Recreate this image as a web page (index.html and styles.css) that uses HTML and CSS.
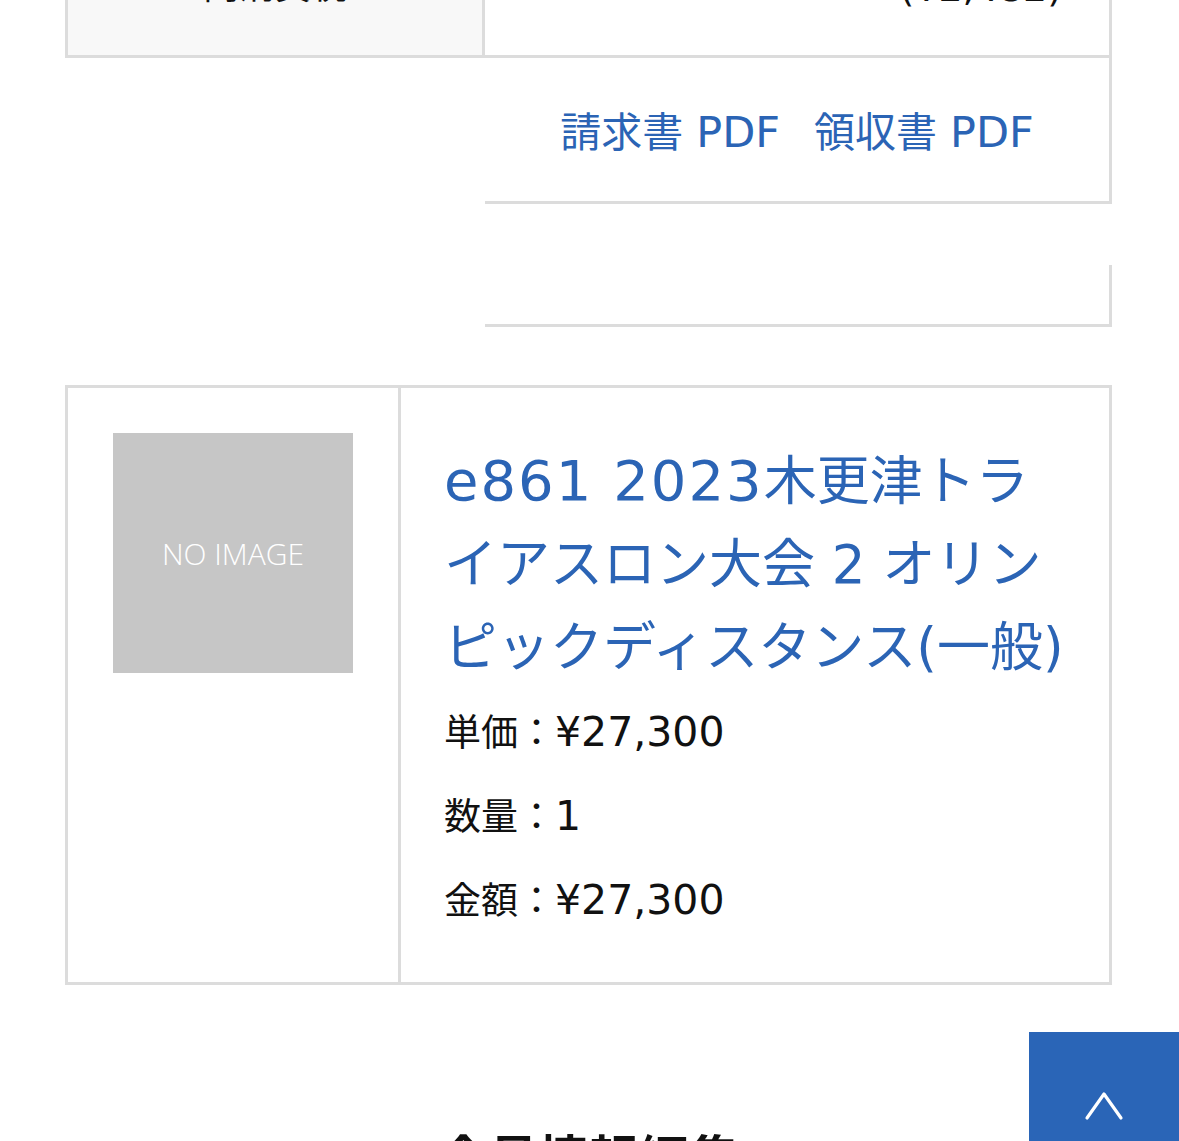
FILE: index.html
```html
<!DOCTYPE html>
<html lang="ja">
<head>
<meta charset="utf-8">
<title>注文履歴詳細</title>
<link rel="stylesheet" href="styles.css">
</head>
<body>
<main class="page">
  <div class="tax-row">
    <div class="tax-label">内消費税</div>
    <div class="tax-value">(¥2,482)</div>
  </div>
  <div class="doc-row">
    <div class="doc-links">
      <a class="doc-link" href="#">請求書 <span class="doc-type">PDF</span></a>
      <a class="doc-link" href="#">領収書 <span class="doc-type">PDF</span></a>
    </div>
  </div>
  <div class="blank-row"></div>
  <section class="item">
    <div class="item-thumb">
      <div class="noimage">NO IMAGE</div>
    </div>
    <div class="item-body">
      <h3 class="item-title"><a href="#"><span class="title-code">e861 2023</span>木更津トライアスロン大会 2 オリンピックディスタンス(一般)</a></h3>
      <p class="item-line">単価：<span class="item-value">¥27,300</span></p>
      <p class="item-line">数量：<span class="item-value">1</span></p>
      <p class="item-line">金額：<span class="item-value">¥27,300</span></p>
    </div>
  </section>
  <h2 class="section-title">会員情報編集</h2>
</main>
<a class="pagetop" href="#" aria-label="ページトップへ">
  <svg class="pagetop-icon" width="150" height="150" viewBox="0 0 150 150">
    <polyline points="58,86 75,62 92,86" fill="none" stroke="#ffffff" stroke-width="3.2" stroke-linecap="round" stroke-linejoin="round"/>
  </svg>
</a>
</body>
</html>
```

FILE: styles.css
```css
html, body {
  margin: 0;
  padding: 0;
  overflow: hidden;
  background: #ffffff;
}

body {
  font-family: "DejaVu Sans", "Noto Sans CJK JP", sans-serif;
  color: #111111;
}

*, *::before, *::after {
  box-sizing: border-box;
}

.page {
  margin: 0 67px 0 65px;
}

/* tax row (scrolled partly out of view) */
.tax-row {
  margin-top: -73px;
  display: grid;
  grid-template-columns: 417px 1fr;
  border: 3px solid #dcdcdc;
  height: 131px;
}

.tax-label {
  background: #f8f8f8;
  border-right: 3px solid #dcdcdc;
  font-size: 36px;
  line-height: 54px;
  padding-top: 30px;
  text-align: center;
}

.tax-value {
  font-size: 38px;
  line-height: 54px;
  padding-top: 31px;
  padding-right: 47px;
  text-align: right;
}

/* document links row */
.doc-row {
  margin-left: 420px;
  border-right: 3px solid #dcdcdc;
  border-bottom: 3px solid #dcdcdc;
  height: 146px;
  display: flex;
  align-items: center;
  justify-content: center;
  padding-top: 6px;
}

.doc-links {
  display: flex;
  gap: 34px;
}

.doc-link {
  font-size: 41px;
  line-height: 60px;
  color: #2b64b5;
  text-decoration: none;
}

.doc-type {
  font-size: 43px;
  line-height: 1;
}

.blank-row {
  margin-left: 420px;
  margin-top: 61px;
  border-right: 3px solid #dcdcdc;
  border-bottom: 3px solid #dcdcdc;
  height: 62px;
}

/* item card */
.item {
  margin-top: 58px;
  border: 3px solid #dcdcdc;
  display: grid;
  grid-template-columns: 330px 1fr;
}

.item-thumb {
  padding-top: 45px;
  display: flex;
  justify-content: center;
  align-items: flex-start;
}

.noimage {
  width: 240px;
  height: 240px;
  background: #c6c6c6;
  color: #ffffff;
  font-family: "Open Sans", "Noto Sans", sans-serif;
  font-weight: 300;
  font-size: 30px;
  display: flex;
  align-items: center;
  justify-content: center;
}

.item-body {
  border-left: 3px solid #dcdcdc;
  padding: 52px 36px 53px 43px;
}

.item-title {
  margin: 0;
  font-size: 53px;
  line-height: 83px;
  font-weight: normal;
}

.item-title a {
  color: #2b64b5;
  text-decoration: none;
}

.title-code {
  font-size: 56px;
  letter-spacing: 2px;
  line-height: 1;
}

.item-line {
  margin: 30px 0 0;
  font-size: 37px;
  line-height: 54px;
  color: #111111;
}

.item-title + .item-line {
  margin-top: 18px;
}

.item-value {
  font-size: 41px;
  line-height: 1;
}

.section-title {
  margin: 138px 0 0;
  text-align: center;
  font-size: 50px;
  line-height: 75px;
  font-weight: bold;
  color: #111111;
}

/* back to top button */
.pagetop {
  position: fixed;
  right: 0;
  top: 1032px;
  width: 150px;
  height: 150px;
  background: #2a65b7;
  display: block;
}

.pagetop-icon {
  display: block;
}
```
